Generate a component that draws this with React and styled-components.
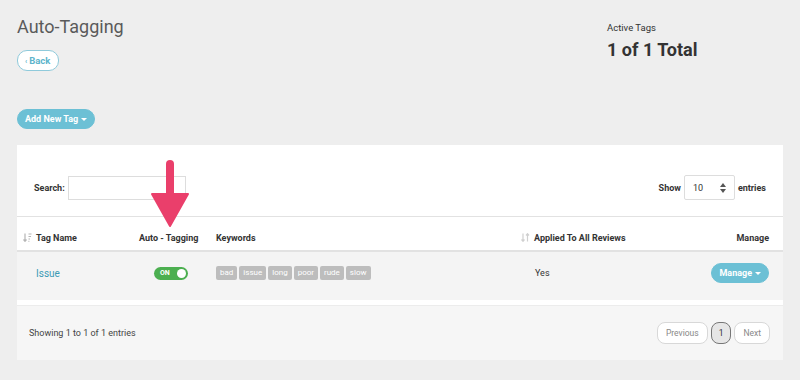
import React from 'react';
import styled, { createGlobalStyle } from 'styled-components';

const GlobalStyle = createGlobalStyle`
  html, body {
    margin: 0;
    padding: 0;
    background: #eeeeee;
    font-family: Roboto, "Liberation Sans", sans-serif;
    color: #333;
  }
`;

const Page = styled.div`
  width: 800px;
  height: 380px;
  padding: 0 17px;
  box-sizing: border-box;
  overflow: hidden;
`;

const TopBar = styled.div`
  display: flex;
  justify-content: space-between;
  padding-top: 14px;
`;

const TitleBlock = styled.div`
  display: flex;
  flex-direction: column;
  align-items: flex-start;
`;

const Title = styled.h1`
  margin: 0;
  font-size: 18px;
  font-weight: 400;
  color: #5a5a5a;
  line-height: 26px;
`;

const PillButton = styled.button`
  font-family: inherit;
  font-weight: 700;
  font-size: 9px;
  border-radius: 10px;
  cursor: pointer;
  height: 20px;
  padding: 0 ${p => p.$px || 7}px;
  display: inline-flex;
  align-items: center;
  gap: 3px;
  border: 1px solid ${p => (p.$outline ? '#8fcadb' : '#6cc0d5')};
  background: ${p => (p.$outline ? '#fff' : '#6cc0d5')};
  color: ${p => (p.$outline ? '#5db4cb' : '#fff')};
`;

const BackButton = styled(PillButton)`
  margin-top: 10px;
  height: 21px;
  padding: 0 8px 0 7px;
  font-size: 9.5px;
  gap: 2px;
`;

const Caret = styled.span`
  display: inline-block;
  width: 0;
  height: 0;
  border-left: 3px solid transparent;
  border-right: 3px solid transparent;
  border-top: 3px solid #fff;
  margin-top: 1px;
`;

const Stats = styled.div`
  width: 176px;
  padding-top: 8px;
`;

const StatLabel = styled.div`
  font-size: 9.5px;
  color: #333;
  line-height: 12px;
`;

const StatValue = styled.div`
  font-size: 18px;
  font-weight: 700;
  color: #333;
  line-height: 28px;
  margin-top: 2px;
`;

const AddRow = styled.div`
  margin-top: 36px;
  margin-bottom: 16px;
`;

const Card = styled.div`
  background: #fff;
  position: relative;
`;

const Controls = styled.div`
  display: flex;
  justify-content: space-between;
  align-items: center;
  padding: 30px 17px 16px 17px;
`;

const ControlLabel = styled.label`
  display: flex;
  align-items: center;
  gap: 3px;
  font-size: 9px;
  font-weight: 700;
  color: #333;
`;

const SearchInput = styled.div`
  width: 116px;
  height: 22px;
  border: 1px solid #ddd;
  background: #fff;
`;

const SelectBox = styled.div`
  width: 33px;
  height: 23px;
  border: 1px solid #ddd;
  border-radius: 2px;
  display: flex;
  align-items: center;
  justify-content: space-between;
  padding: 0 8px;
  font-weight: 400;
  font-size: 9px;
`;

const Table = styled.table`
  width: 100%;
  border-collapse: collapse;
  table-layout: fixed;
`;

const Th = styled.th`
  text-align: ${p => p.$align || 'left'};
  font-size: 9px;
  font-weight: 700;
  color: #333;
  height: 34px;
  box-sizing: border-box;
  padding: 10px ${p => p.$pr || 0}px 0 ${p => p.$pl || 0}px;
  border-top: 1px solid #e2e2e2;
  border-bottom: 2px solid #e2e2e2;
  white-space: nowrap;
`;

const Row = styled.tr`
  background: #f4f4f4;
`;

const Td = styled.td`
  text-align: ${p => p.$align || 'left'};
  font-size: 9px;
  color: #333;
  height: 52px;
  box-sizing: border-box;
  padding: 0 ${p => p.$pr || 0}px 5px ${p => p.$pl || 0}px;
  border-bottom: 5px solid #fff;
`;

const SortIcon = styled.svg`
  margin-right: 4px;
  vertical-align: -1px;
`;

const TagLink = styled.a`
  color: #3b9bb5;
  text-decoration: none;
  font-size: 10px;
`;

const Toggle = styled.span`
  display: inline-flex;
  align-items: center;
  justify-content: space-between;
  width: 34px;
  height: 13px;
  border-radius: 7px;
  background: #4caf50;
  padding: 0 2px 0 6px;
  box-sizing: border-box;
  color: #fff;
  font-size: 7px;
  font-weight: 700;
  vertical-align: middle;
`;

const Knob = styled.span`
  width: 9px;
  height: 9px;
  border-radius: 50%;
  background: #fff;
`;

const Keywords = styled.div`
  display: flex;
  gap: 2px;
`;

const Keyword = styled.span`
  background: #bdbdbd;
  color: #fff;
  font-size: 8px;
  padding: 0 4px;
  height: 14px;
  line-height: 14px;
  border-radius: 2px;
`;

const Footer = styled.div`
  background: #f6f6f6;
  border-top: 1px solid #ececec;
  display: flex;
  justify-content: space-between;
  align-items: center;
  padding: 0 13px 0 12px;
  height: 54px;
`;

const FooterText = styled.span`
  font-size: 9px;
  color: #444;
`;

const Pager = styled.div`
  display: flex;
  gap: 3px;
`;

const PageBtn = styled.span`
  height: 20px;
  padding: 0 ${p => (p.$current ? 7 : 8)}px;
  border-radius: 8px;
  border: 1px solid ${p => (p.$current ? '#777' : '#d8d8d8')};
  background: ${p => (p.$current ? '#e6e6e6' : '#fff')};
  color: ${p => (p.$current ? '#333' : '#888')};
  font-size: 8.5px;
  display: inline-flex;
  align-items: center;
`;

const Arrow = styled.svg`
  position: absolute;
  left: 133px;
  top: 15px;
`;

const keywords = ['bad', 'issue', 'long', 'poor', 'rude', 'slow'];

const Sort = ({ active }) => (
  <SortIcon width="9" height="9" viewBox="0 0 9 9">
    <g stroke={active ? '#b5b5b5' : '#d0d0d0'} strokeWidth="1.2" fill="none">
      <path d="M2 0.5 V8 M0.5 6.5 L2 8.3 L3.5 6.5" />
      {active ? (
        <path d="M5.5 1 H8.5 M5.5 3.5 H8 M5.5 6 H7 M5.5 8.3 H6.3" />
      ) : (
        <path d="M6.5 8.5 V1 M5 2.5 L6.5 0.7 L8 2.5" />
      )}
    </g>
  </SortIcon>
);

export default function App() {
  return (
    <Page>
      <GlobalStyle />
      <TopBar>
        <TitleBlock>
          <Title>Auto-Tagging</Title>
          <BackButton $outline>
            <span style={{ fontSize: '7px' }}>‹</span>Back
          </BackButton>
        </TitleBlock>
        <Stats>
          <StatLabel>Active Tags</StatLabel>
          <StatValue>1 of 1 Total</StatValue>
        </Stats>
      </TopBar>

      <AddRow>
        <PillButton>
          Add New Tag <Caret />
        </PillButton>
      </AddRow>

      <Card>
        <Controls>
          <ControlLabel>
            Search: <SearchInput />
          </ControlLabel>
          <ControlLabel>
            Show
            <SelectBox>
              <span>10</span>
              <svg width="6" height="10" viewBox="0 0 6 10">
                <path d="M3 0 L6 4 H0 Z M0 6 H6 L3 10 Z" fill="#555" />
              </svg>
            </SelectBox>
            entries
          </ControlLabel>
        </Controls>

        <Table>
          <colgroup>
            <col style={{ width: '115px' }} />
            <col style={{ width: '77px' }} />
            <col style={{ width: '306px' }} />
            <col style={{ width: '170px' }} />
            <col />
          </colgroup>
          <thead>
            <tr>
              <Th $pl={6}>
                <Sort active />
                Tag Name
              </Th>
              <Th $pl={7}>Auto - Tagging</Th>
              <Th $pl={7}>Keywords</Th>
              <Th $pl={6}>
                <Sort />
                Applied To All Reviews
              </Th>
              <Th $align="right" $pr={14}>Manage</Th>
            </tr>
          </thead>
          <tbody>
            <Row>
              <Td $pl={19}>
                <TagLink href="#">Issue</TagLink>
              </Td>
              <Td $pl={22}>
                <Toggle>
                  ON <Knob />
                </Toggle>
              </Td>
              <Td $pl={7}>
                <Keywords>
                  {keywords.map(k => (
                    <Keyword key={k}>{k}</Keyword>
                  ))}
                </Keywords>
              </Td>
              <Td $pl={20}>Yes</Td>
              <Td $align="right" $pr={14}>
                <PillButton $px={7}>
                  Manage <Caret />
                </PillButton>
              </Td>
            </Row>
          </tbody>
        </Table>

        <Footer>
          <FooterText>Showing 1 to 1 of 1 entries</FooterText>
          <Pager>
            <PageBtn>Previous</PageBtn>
            <PageBtn $current>1</PageBtn>
            <PageBtn>Next</PageBtn>
          </Pager>
        </Footer>

        <Arrow width="40" height="68" viewBox="0 0 40 68">
          <path d="M20 4 V38" stroke="#ea3f6b" strokeWidth="8" strokeLinecap="round" />
          <path d="M2 34 L38 34 L20 66 Z" fill="#ea3f6b" strokeLinejoin="round" stroke="#ea3f6b" strokeWidth="2" />
        </Arrow>
      </Card>
    </Page>
  );
}
